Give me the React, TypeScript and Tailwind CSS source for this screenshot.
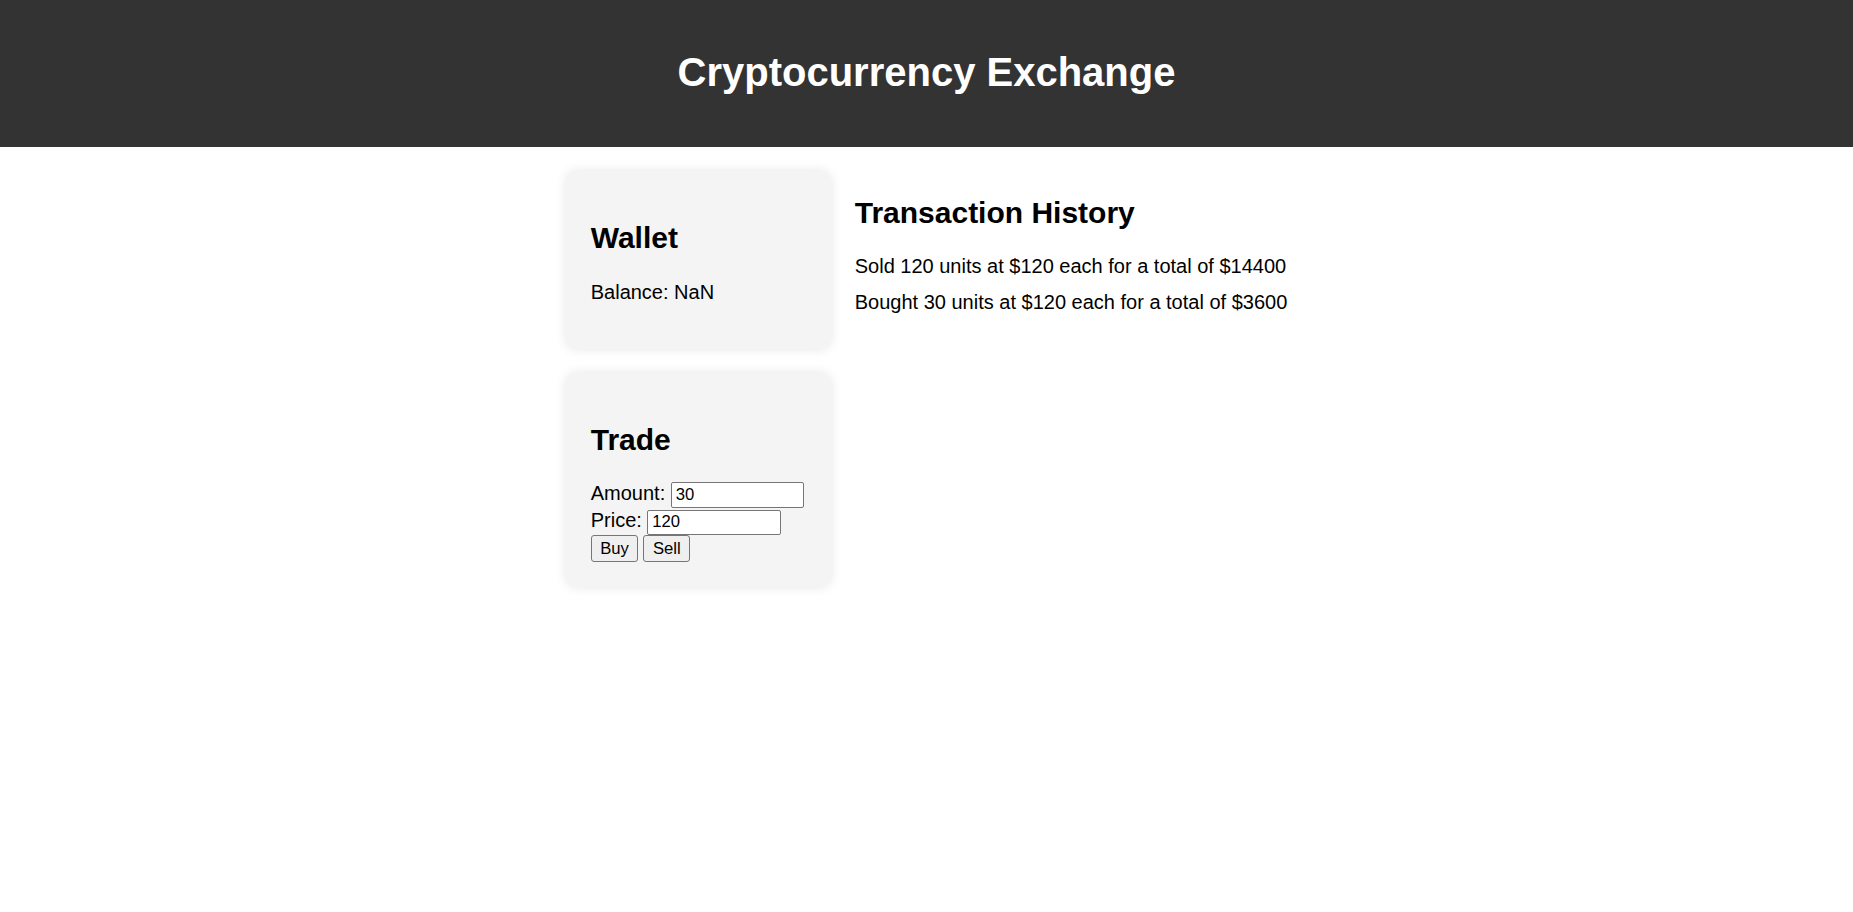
import React from "react";

export default function App() {
  const transactions = [
    "Sold 120 units at $120 each for a total of $14400",
    "Bought 30 units at $120 each for a total of $3600",
  ];
  return (
    <div className="min-h-screen bg-white text-black font-['Liberation_Sans',Arial,sans-serif]">
      <header className="bg-[#333333] pt-[49px] pb-[52px] text-center">
        <h1 className="text-[40px] leading-[46px] font-bold text-white">Cryptocurrency Exchange</h1>
      </header>
      <main className="flex justify-center items-start pt-[24px]">
        <div className="flex flex-col gap-[24px] w-[265px]">
          <section className="bg-[#f4f4f4] rounded-[10px] shadow-[0_0_12px_rgba(0,0,0,0.1)] p-[25px]">
            <h2 className="text-[30px] leading-[34.5px] font-bold my-[25px]">Wallet</h2>
            <p className="text-[20px] leading-[23px] mb-[20px]">Balance: NaN</p>
          </section>
          <section className="bg-[#f4f4f4] rounded-[10px] shadow-[0_0_12px_rgba(0,0,0,0.1)] p-[25px]">
            <h2 className="text-[30px] leading-[34.5px] font-bold my-[25px]">Trade</h2>
            <div className="flex flex-col text-[20px] leading-[23px]">
              <div className="flex items-baseline gap-[5.5px]">
                <span>Amount:</span>
                <input
                  type="text"
                  defaultValue="30"
                  className="w-[133px] h-[26px] border border-[#767676] rounded-[2px] bg-white pl-[4px] text-[16.67px] leading-[19px] text-black outline-none"
                />
              </div>
              <div className="flex items-baseline gap-[5.5px] mt-[1px]">
                <span>Price:</span>
                <input
                  type="text"
                  defaultValue="120"
                  className="w-[134px] h-[25px] border border-[#767676] rounded-[2px] bg-white pl-[4px] text-[16.67px] leading-[19px] text-black outline-none"
                />
              </div>
              <div className="flex gap-[5px]">
                <button className="h-[27px] px-[8.5px] border border-[#767676] rounded-[3px] bg-[#efefef] text-[16.67px] leading-[19px] text-black">
                  Buy
                </button>
                <button className="h-[27px] px-[8.5px] border border-[#767676] rounded-[3px] bg-[#efefef] text-[16.67px] leading-[19px] text-black">
                  Sell
                </button>
              </div>
            </div>
          </section>
        </div>
        <div className="ml-[24px]">
          <h2 className="text-[30px] leading-[34.5px] font-bold mt-[25px] mb-[24px]">Transaction History</h2>
          <ul>
            {transactions.map((t) => (
              <li key={t} className="text-[20px] leading-[23px] mb-[13px]">
                {t}
              </li>
            ))}
          </ul>
        </div>
      </main>
    </div>
  );
}
